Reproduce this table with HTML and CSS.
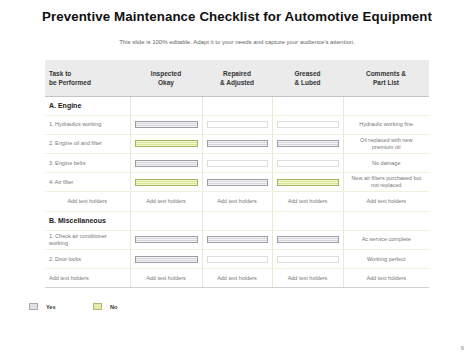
FILE: index.html
```html
<!DOCTYPE html>
<html>
<head>
<meta charset="utf-8">
<link rel="stylesheet" href="styles.css">
</head>
<body>
<div class="slide">
  <h1 class="title">Preventive Maintenance Checklist for Automotive Equipment</h1>
  <p class="subtitle">This slide is 100% editable. Adapt it to your needs and capture your audience's attention.</p>
  <table class="checklist">
    <colgroup>
      <col class="c1"><col class="c2"><col class="c3"><col class="c4"><col class="c5">
    </colgroup>
    <thead>
      <tr>
        <th class="left">Task to<br>be Performed</th>
        <th>Inspected<br>Okay</th>
        <th>Repaired<br>&amp; Adjusted</th>
        <th>Greased<br>&amp; Lubed</th>
        <th>Comments &amp;<br>Part List</th>
      </tr>
    </thead>
    <tbody>
      <tr class="section"><td class="sec">A. Engine</td><td></td><td></td><td></td><td></td></tr>
      <tr><td class="task">1. Hydraulics working</td><td><div class="bar gray"></div></td><td><div class="bar empty"></div></td><td><div class="bar empty"></div></td><td class="cm">Hydraulic working fine</td></tr>
      <tr><td class="task">2. Engine oil and filter</td><td><div class="bar green"></div></td><td><div class="bar gray"></div></td><td><div class="bar gray"></div></td><td class="cm">Oil replaced with new<br>premium oil</td></tr>
      <tr><td class="task">3. Engine belts</td><td><div class="bar gray"></div></td><td><div class="bar empty"></div></td><td><div class="bar empty"></div></td><td class="cm">No damage</td></tr>
      <tr><td class="task">4. Air filter</td><td><div class="bar green"></div></td><td><div class="bar gray"></div></td><td><div class="bar green"></div></td><td class="cm">New air filters purchased but<br>not replaced</td></tr>
      <tr><td class="cm">Add text holders</td><td class="cm">Add text holders</td><td class="cm">Add text holders</td><td class="cm">Add text holders</td><td class="cm">Add text holders</td></tr>
      <tr class="section"><td class="sec">B. Miscellaneous</td><td></td><td></td><td></td><td></td></tr>
      <tr><td class="task">1. Check air conditioner<br>working</td><td><div class="bar gray"></div></td><td><div class="bar gray"></div></td><td><div class="bar gray"></div></td><td class="cm">Ac service complete</td></tr>
      <tr><td class="task">2. Door locks</td><td><div class="bar gray"></div></td><td><div class="bar empty"></div></td><td><div class="bar empty"></div></td><td class="cm">Working perfect</td></tr>
      <tr class="last"><td class="task">Add text holders</td><td class="cm">Add text holders</td><td class="cm">Add text holders</td><td class="cm">Add text holders</td><td class="cm">Add text holders</td></tr>
    </tbody>
  </table>
  <div class="legend">
    <div class="item"><span class="sw gray"></span><span class="lbl">Yes</span></div>
    <div class="item"><span class="sw green"></span><span class="lbl">No</span></div>
  </div>
  <div class="page">6</div>
</div>
</body>
</html>
```
FILE: styles.css
```css
* { box-sizing: border-box; }
html, body { margin: 0; padding: 0; background: #fff; }
.slide {
  width: 474px;
  height: 355px;
  font-family: "Liberation Sans", Arial, sans-serif;
  display: flex;
  flex-direction: column;
  padding-top: 8px;
}
.title {
  margin: 0;
  font-size: 13.3px;
  font-weight: bold;
  color: #111;
  text-align: center;
  line-height: 18px;
  letter-spacing: 0.1px;
}
.subtitle {
  margin: 12px 0 0;
  font-size: 6px;
  line-height: 8px;
  color: #666;
  text-align: center;
}
.checklist {
  margin: 14px 0 0 45px;
  width: 384px;
  border-collapse: collapse;
  table-layout: fixed;
}
.c1 { width: 85px; }
.c2 { width: 72px; }
.c3 { width: 70px; }
.c4 { width: 71px; }
.c5 { width: 86px; }
.checklist th {
  background: #ebebeb;
  height: 36px;
  font-size: 6.5px;
  line-height: 9px;
  font-weight: bold;
  color: #333;
  text-align: center;
  padding: 0;
  border-bottom: 1px solid #c4c4c4;
}
.checklist th.left { text-align: left; padding-left: 4px; }
.checklist td {
  height: 19.2px;
  padding: 0;
  font-size: 5.5px;
  line-height: 7px;
  color: #777;
  border-bottom: 1px solid #eef0e0;
  border-left: 1px solid #e8ebd4;
  vertical-align: middle;
}
.checklist td:first-child { border-left: none; }
.checklist tr.last td { border-bottom: 1px solid #cfcfcf; }
.task { padding-left: 4px !important; }
.sec {
  padding-left: 4px !important;
  font-size: 7px !important;
  font-weight: bold;
  color: #222 !important;
}
.cm { text-align: center; }
.bar {
  height: 7px;
  margin: 0 4px;
  border: 1px solid #dcdcdc;
  background: #fff;
}
.bar.gray {
  border-color: #9c9ca4;
  background: repeating-linear-gradient(to bottom, #f4f4f6 0 1px, #d6d6dc 1px 2px);
}
.bar.green {
  border-color: #a7b25a;
  background: repeating-linear-gradient(to bottom, #f1f6cf 0 1px, #dbe69a 1px 2px);
}
.legend {
  display: flex;
  margin: 15px 0 0 29px;
}
.item { display: flex; align-items: center; width: 64px; }
.sw {
  width: 9px;
  height: 7px;
  border: 1px solid #aaa;
  background: #e2e2e4;
}
.sw.green { border-color: #b0b86a; background: #e2eab0; }
.lbl {
  margin-left: 8px;
  font-size: 5.5px;
  font-weight: bold;
  color: #333;
}
.page {
  margin-top: auto;
  margin-bottom: 4px;
  align-self: flex-end;
  margin-right: 10px;
  font-size: 6px;
  color: #888;
}
```
